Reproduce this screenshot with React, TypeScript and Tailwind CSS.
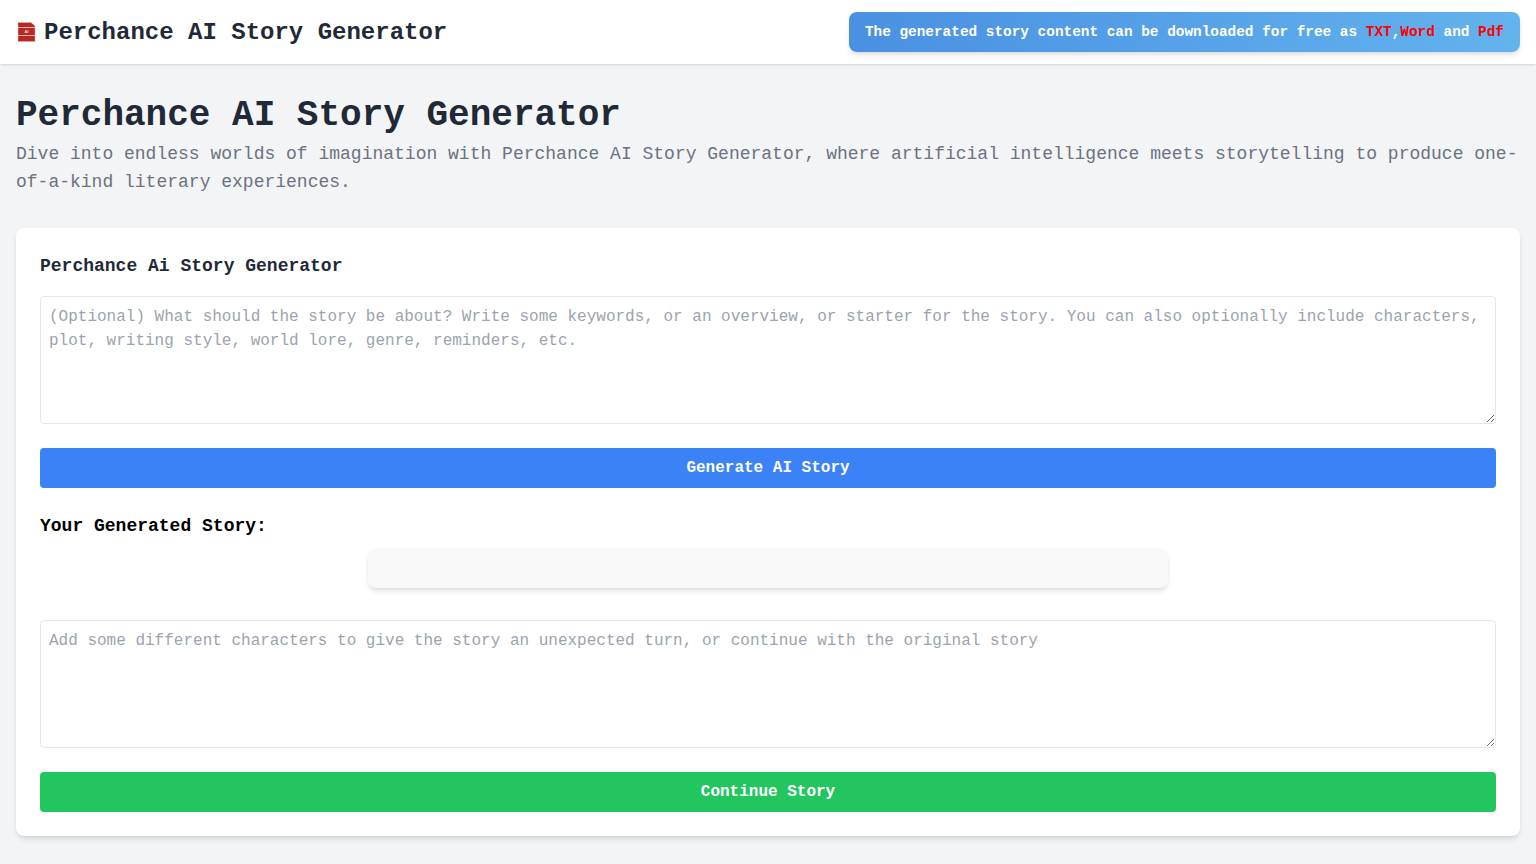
const App = () => {
  return (
    <div className="min-h-screen bg-[#f3f4f6] font-['Liberation_Mono',monospace] text-[#1f2937]">
      {/* Header */}
      <header className="h-16 bg-white shadow-sm px-4 flex items-center justify-between">
        <div className="flex items-center gap-2">
          <svg width="20" height="20" viewBox="0 0 20 20" className="shrink-0" aria-hidden="true">
            <path d="M2 .5H15L19 4V19.5H2Z" fill="#b52a25" stroke="#e9a9a6" strokeWidth="0.5" />
            <path d="M2 5.5H19M2 13.5H19" stroke="#f5d5d3" strokeWidth="0.8" />
            <text x="10.5" y="11" textAnchor="middle" fontSize="4" fill="#f7dcdb" fontFamily="Liberation Sans" fontWeight="700">AI</text>
          </svg>
          <span className="text-2xl font-bold pt-px">Perchance AI Story Generator</span>
        </div>
        <div className="h-10 px-4 pt-[2px] flex items-center rounded-lg text-[14.4px] font-bold text-white shadow-md bg-linear-to-r from-[#4a90e2] to-[#63b3ed]">
          <span>
            The generated story content can be downloaded for free as{" "}
            <span className="text-[#ff0000]">TXT</span>,<span className="text-[#ff0000]">Word</span> and{" "}
            <span className="text-[#ff0000]">Pdf</span>
          </span>
        </div>
      </header>

      <main className="px-4 pt-8 pb-7">
        <h1 className="text-4xl font-bold mb-1">Perchance AI Story Generator</h1>
        <p className="text-lg leading-7 text-[#6b7280]">
          Dive into endless worlds of imagination with Perchance AI Story Generator, where artificial intelligence meets storytelling to produce one-of-a-kind literary experiences.
        </p>

        {/* Generator card */}
        <section className="mt-8 bg-white rounded-lg shadow-md p-6">
          <h2 className="text-lg font-bold mb-4">Perchance Ai Story Generator</h2>
          <textarea
            className="block w-full h-32 p-2 border border-[#e5e7eb] rounded text-base outline-none placeholder:text-[#9ca3af]"
            placeholder="(Optional) What should the story be about? Write some keywords, or an overview, or starter for the story. You can also optionally include characters, plot, writing style, world lore, genre, reminders, etc."
          />
          <button className="block w-full h-10 mt-6 rounded bg-[#3b82f6] text-white font-bold text-base">
            Generate AI Story
          </button>
          <h3 className="mt-6 text-lg leading-7 font-bold text-black">Your Generated Story:</h3>
          <div className="w-[800px] h-10 mx-auto mt-2 rounded-lg bg-[#f9f9f9] shadow-md" />
          <textarea
            className="block w-full h-32 mt-8 p-2 border border-[#e5e7eb] rounded text-base outline-none placeholder:text-[#9ca3af]"
            placeholder="Add some different characters to give the story an unexpected turn, or continue with the original story"
          />
          <button className="block w-full h-10 mt-6 rounded bg-[#22c55e] text-white font-bold text-base">
            Continue Story
          </button>
        </section>
      </main>
    </div>
  );
};

export default App;
